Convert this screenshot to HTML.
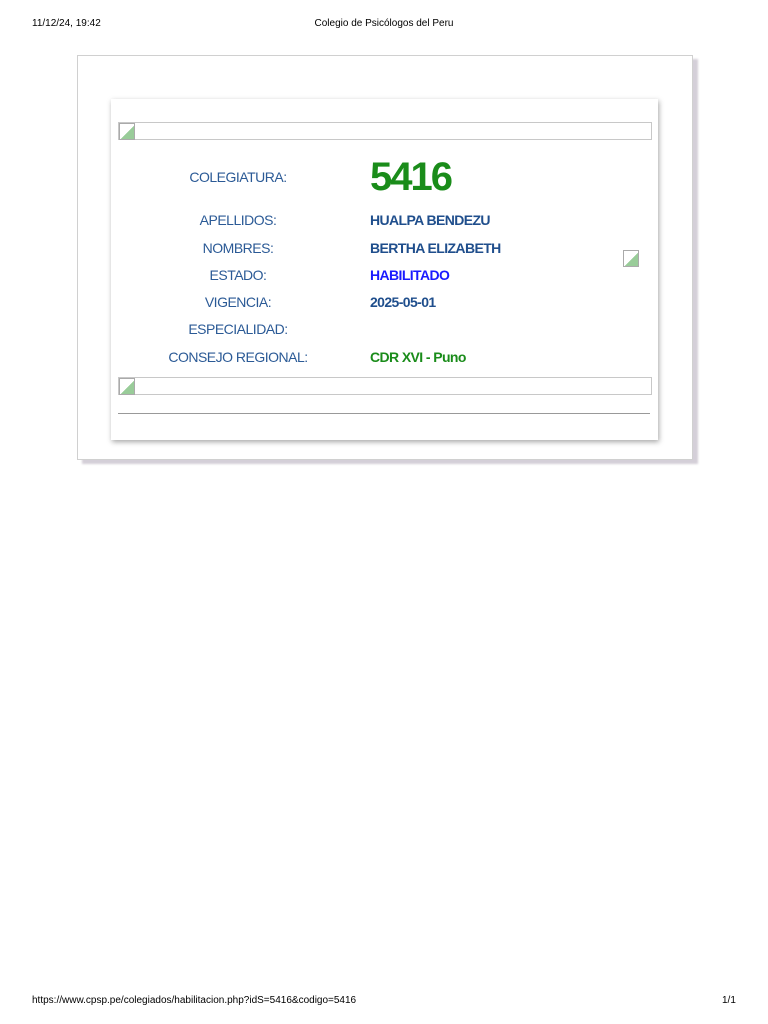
<!DOCTYPE html>
<html><head><meta charset="utf-8"><style>
body{margin:0;width:768px;height:1024px;background:#fff;position:relative;font-family:"Liberation Sans",sans-serif;overflow:hidden}
.hdr{position:absolute;font-size:10px;color:#000;top:18px}
.outer{position:absolute;left:77px;top:55px;width:614px;height:403px;border:1px solid #d0d0d0;background:#fff;box-shadow:5px 4px 2px #d4cfd8}
.card{position:absolute;left:111px;top:99px;width:547px;height:341px;background:#fff;box-shadow:1px 2px 5px rgba(0,0,0,.35)}
.imgbar{position:absolute;left:118px;width:532px;border:1px solid #c8c8c8;height:16px}
.ic{position:absolute;width:14px;height:15px;border:1px solid #aaa;background:linear-gradient(135deg,#fff 55%,#9c9 55%)}
.lab{position:absolute;width:240px;left:118px;text-align:center;color:#2b5a96;font-size:14px;letter-spacing:-0.5px}
.val{position:absolute;left:370px;font-weight:bold;font-size:14px;color:#1f4e8c;letter-spacing:-0.6px}
</style></head><body>
<div class="hdr" style="left:32px">11/12/24, 19:42</div>
<div class="hdr" style="left:0;width:768px;text-align:center">Colegio de Psicólogos del Peru</div>
<div class="outer"></div>
<div class="card"></div>
<div class="imgbar" style="top:122px"></div>
<div class="ic" style="left:119px;top:123px"></div>
<div class="imgbar" style="top:377px"></div>
<div class="ic" style="left:119px;top:378px"></div>
<div class="ic" style="left:623px;top:250px"></div>
<div style="position:absolute;left:118px;top:413px;width:532px;border-top:1px solid #999"></div>
<div class="lab" style="top:169px">COLEGIATURA:</div>
<div class="val" style="top:155px;font-size:40px;color:#1a8c1a;letter-spacing:-2px">5416</div>
<div class="lab" style="top:212px">APELLIDOS:</div><div class="val" style="top:212px">HUALPA BENDEZU</div>
<div class="lab" style="top:240px">NOMBRES:</div><div class="val" style="top:240px">BERTHA ELIZABETH</div>
<div class="lab" style="top:267px">ESTADO:</div><div class="val" style="top:267px;color:#1a1aff">HABILITADO</div>
<div class="lab" style="top:294px">VIGENCIA:</div><div class="val" style="top:294px">2025-05-01</div>
<div class="lab" style="top:321px">ESPECIALIDAD:</div>
<div class="lab" style="top:349px">CONSEJO REGIONAL:</div><div class="val" style="top:349px;color:#1a8c1a">CDR XVI - Puno</div>
<div class="hdr" style="left:32px;top:995px">https://www.cpsp.pe/colegiados/habilitacion.php?idS=5416&amp;codigo=5416</div>
<div class="hdr" style="left:722px;top:995px">1/1</div>
</body></html>
